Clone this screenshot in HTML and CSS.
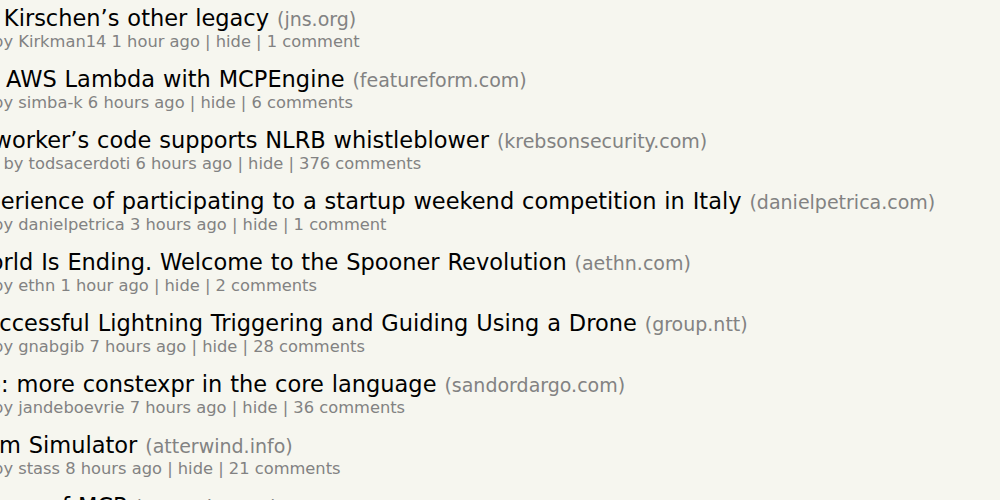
FILE: index.html
```html
<!DOCTYPE html>
<html lang="en">
<head>
    <meta charset="UTF-8">
    <meta name="viewport" content="width=device-width, initial-scale=1.0">
    <title>Hacker News</title>
    <link rel="stylesheet" href="styles.css">
</head>
<body>
    <ol class="stories">
        <li class="story">
            <div class="titleline"><a href="#">Ronald Kirschen’s other legacy</a> <span class="site">(jns.org)</span></div>
            <div class="subline">42 points by Kirkman14 1 hour ago | hide | 1 comment</div>
        </li>
        <li class="story">
            <div class="titleline"><a href="#">Run on AWS Lambda with MCPEngine</a> <span class="site">(featureform.com)</span></div>
            <div class="subline">37 points by simba-k 6 hours ago | hide | 6 comments</div>
        </li>
        <li class="story">
            <div class="titleline"><a href="#">DOGE worker’s code supports NLRB whistleblower</a> <span class="site">(krebsonsecurity.com)</span></div>
            <div class="subline">932 points by todsacerdoti 6 hours ago | hide | 376 comments</div>
        </li>
        <li class="story">
            <div class="titleline"><a href="#">My experience of participating to a startup weekend competition in Italy</a> <span class="site">(danielpetrica.com)</span></div>
            <div class="subline">15 points by danielpetrica 3 hours ago | hide | 1 comment</div>
        </li>
        <li class="story">
            <div class="titleline"><a href="#">The World Is Ending. Welcome to the Spooner Revolution</a> <span class="site">(aethn.com)</span></div>
            <div class="subline">23 points by ethn 1 hour ago | hide | 2 comments</div>
        </li>
        <li class="story">
            <div class="titleline"><a href="#">NTT Successful Lightning Triggering and Guiding Using a Drone</a> <span class="site">(group.ntt)</span></div>
            <div class="subline">88 points by gnabgib 7 hours ago | hide | 28 comments</div>
        </li>
        <li class="story">
            <div class="titleline"><a href="#">C++26: more constexpr in the core language</a> <span class="site">(sandordargo.com)</span></div>
            <div class="subline">64 points by jandeboevrie 7 hours ago | hide | 36 comments</div>
        </li>
        <li class="story">
            <div class="titleline"><a href="#">Ant Farm Simulator</a> <span class="site">(atterwind.info)</span></div>
            <div class="subline">71 points by stass 8 hours ago | hide | 21 comments</div>
        </li>
        <li class="story">
            <div class="titleline"><a href="#">The Future of MCP</a> <span class="site">(example.com)</span></div>
            <div class="subline">19 points by someone 2 hours ago | hide | 4 comments</div>
        </li>
    </ol>
</body>
</html>
```
FILE: styles.css
```css
body{
    margin:0;
    background:#f6f6ef;
    font-family:"DejaVu Sans", Verdana, sans-serif;
    overflow:hidden;
}
.stories{
    list-style:none;
    margin:0 0 0 -81px;
    padding:5px 0 0 0;
    white-space:nowrap;
}
.story{
    margin-bottom:14px;
}
.titleline{
    font-size:22.5px;
    line-height:27px;
    word-spacing:0.75px;
}
.titleline a{
    color:#000;
    text-decoration:none;
}
.site{
    font-size:19px;
    line-height:20px;
    color:#828282;
}
.subline{
    margin-left:-7px;
    font-size:16.3px;
    line-height:20px;
    color:#828282;
}
```
